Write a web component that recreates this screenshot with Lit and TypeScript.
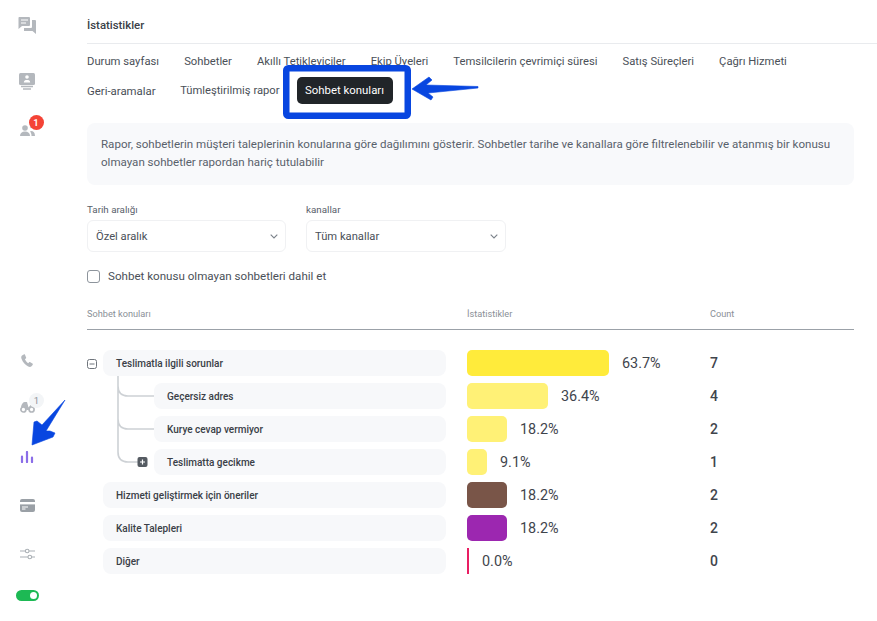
import { LitElement, html, css, svg } from "lit";
import { customElement } from "lit/decorators.js";

interface Row { name: string; level: number; pct: string; width: number; color: string; count: number; }

const ROWS: Row[] = [
  { name: "Teslimatla ilgili sorunlar", level: 0, pct: "63.7%", width: 142, color: "#ffeb3b", count: 7 },
  { name: "Geçersiz adres", level: 1, pct: "36.4%", width: 81, color: "#fff176", count: 4 },
  { name: "Kurye cevap vermiyor", level: 1, pct: "18.2%", width: 40, color: "#fff176", count: 2 },
  { name: "Teslimatta gecikme", level: 1, pct: "9.1%", width: 20, color: "#fff176", count: 1 },
  { name: "Hizmeti geliştirmek için öneriler", level: 0, pct: "18.2%", width: 40, color: "#795548", count: 2 },
  { name: "Kalite Talepleri", level: 0, pct: "18.2%", width: 40, color: "#9c27b0", count: 2 },
  { name: "Diğer", level: 0, pct: "0.0%", width: 2, color: "#e91e63", count: 0 },
];

const chevron = html`<svg class="chev" width="8" height="5" viewBox="0 0 8 5"><path d="M.7.7 4 4 7.300.7" fill="none" stroke="#7b828a" stroke-width="1.100"/></svg>`;

@customElement("app-root")
export class AppRoot extends LitElement {
  static styles = css`
    :host { display: block; position: relative; width: 877px; height: 621px; overflow: hidden; background: #fff;
      font-family: Roboto, "Noto Sans", sans-serif; color: #3f454c; }
    .page { display: flex; height: 621px; }
    .rail { width: 54px; flex: none; display: flex; flex-direction: column; justify-content: space-between; padding-bottom: 14px; box-sizing: border-box; }
    .rail-top { display: grid; grid-template-rows: 50px 64px 32px; justify-items: center; align-items: center; }
    .rail-bot { display: grid; grid-template-rows: 50px 44px 56px 40px 58px 24px; justify-items: center; align-items: center; }
    .ic { position: relative; display: flex; }
    .badge { position: absolute; width: 15px; height: 15px; border-radius: 50%; font-size: 9.5px; line-height: 15px; text-align: center; }
    .badge.red { background: #f44336; color: #fff; font-weight: 600; left: 9px; top: -9.5px; }
    .badge.grey { background: #f3f5f7; color: #8b9299; left: 9.5px; top: -8px; }
    .toggle { width: 23px; height: 11px; border-radius: 6px; background: #1db954; position: relative; }
    .toggle::after { content: ""; position: absolute; right: 2px; top: 2px; width: 7px; height: 7px; border-radius: 50%; background: #fff; }

    .main { flex: 1; padding-left: 33px; min-width: 0; }
    .title { height: 44px; box-sizing: border-box; padding-top: 17px; font-size: 11.4px; line-height: 16px; font-weight: 500; color: #3a4047; border-bottom: 1px solid #e9ebee; }
    .tabs { width: 767px; padding-top: 9px; font-size: 11.25px; color: #4a5058; }
    .tabrow { display: flex; align-items: center; gap: 25px; height: 18px; line-height: 18px; }
    .tabrow.second { margin-top: 6px; height: 27px; gap: 17px; font-size: 11.4px; }
    .tabrow.second .t2 { margin-left: 7.5px; font-size: 11.2px; }
    .active { background: #212529; color: #fff; border-radius: 5px; height: 27px; line-height: 27px; padding: 0 8.5px; }
    .note { width: 767px; box-sizing: border-box; margin-top: 19px; height: 62px; padding: 13px 14px; background: #f8f9fb; border-radius: 8px; font-size: 11.55px; line-height: 17.5px; color: #59616b; white-space: nowrap; }
    .filters { display: flex; gap: 20px; margin-top: 18px; }
    .field { width: 199px; }
    .field.b { width: 200px; }
    .lab { font-size: 9.8px; line-height: 14px; color: #59616b; margin-bottom: 3px; }
    .sel { height: 32px; box-sizing: border-box; border: 1px solid #f0f1f3; border-radius: 6px; display: flex; align-items: center; justify-content: space-between; padding: 0 7px 0 8px; font-size: 11.2px; color: #4a5058; }
    .chk { display: flex; align-items: center; gap: 8px; margin-top: 17px; height: 14px; font-size: 11.6px; color: #4a5058; }
    .box { width: 11px; height: 11px; border: 1px solid #8d949c; border-radius: 3px; }
    .thead { width: 767px; display: grid; grid-template-columns: 380px 243px 1fr; margin-top: 24px; height: 23px; box-sizing: border-box; border-bottom: 1px solid #9ba1a8; font-size: 9.2px; line-height: 14px; color: #8a9097; }
    .tree { position: relative; width: 767px; margin-top: 20px; display: flex; flex-direction: column; gap: 7px; }
    .row { display: grid; grid-template-columns: 380px 243px 1fr; height: 26px; align-items: center; }
    .name { margin-left: 16px; height: 26px; box-sizing: border-box; background: #f7f8fa; border-radius: 8px; width: 343px; padding-left: 13px; line-height: 28px; font-size: 10px; font-weight: 500; color: #3a4047; }
    .row.child .name { margin-left: 67px; width: 292px; }
    .stat { display: flex; align-items: center; gap: 13px; font-size: 14.4px; color: #3f454c; }
    .bar { height: 26px; border-radius: 5px; flex: none; }
    .bar.thin { border-radius: 0; }
    .count { font-size: 14px; font-weight: 500; color: #3f454c; }
    .lines { position: absolute; left: 0; top: 0; pointer-events: none; }
    .annot { position: absolute; left: 0; top: 0; pointer-events: none; }
  `;

  private rail() {
    const g = "#b4b8bd";
    return html`<div class="rail">
      <div class="rail-top">
        <div class="ic"><svg width="18" height="17" viewBox="0 0 18 17"><path d="M1 0h10a1 1 0 0 1 1 1v7a1 1 0 0 1-1 1H4l-3.500 3V1A1 1 0 0 1 1 0z" fill="${g}"/><path d="M3 3h7M3 6h5" stroke="#fff" stroke-width="1"/><path d="M14 3h3a1 1 0 0 1 1 1v13l-3.500-3H6v-3h7a1 1 0 0 0 1-1z" fill="${g}"/></svg></div>
        <div class="ic"><svg width="16" height="18" viewBox="0 0 16 18"><rect width="16" height="12" rx="1.500" fill="${g}"/><circle cx="8" cy="4" r="1.800" fill="#fff"/><path d="M4.800 9.500c0-2 1.500-2.500 3.200-2.500s3.200.500 3.200 2.500z" fill="#fff"/><path d="M2 13.500h12M4 16h8" stroke="${g}" stroke-width="1.600"/></svg></div>
        <div class="ic"><svg width="15" height="11" viewBox="0 0 15 11"><circle cx="5" cy="3" r="2.800" fill="${g}"/><path d="M0 11c0-3 2-4.500 5-4.500S10 8 10 11z" fill="${g}"/><circle cx="11" cy="2" r="1.200" fill="${g}" opacity=".7"/><path d="M11 6c2.500 0 4 1.700 4 5h-3.500c0-2-.5-3.500-1.500-4.500z" fill="${g}"/></svg><span class="badge red">1</span></div>
      </div>
      <div class="rail-bot">
        <div class="ic"><svg width="12" height="13" viewBox="0 0 12 13"><path d="M2.800.4 1 1.500C.2 2.200 0 3.300.5 4.800c1.300 3.600 3.500 6 6.700 7.700 1.300.600 2.500.500 3.300-.3l1.100-1.300c.4-.5.300-1-.2-1.400L9.300 8.200c-.5-.3-1-.2-1.400.2l-.7.800C6 8.600 4.500 6.700 3.900 5.300l.9-.8c.4-.4.500-.9.200-1.300L3.900.6C3.600.2 3.200.1 2.800.4z" fill="${g}"/></svg></div>
        <div class="ic"><svg width="15" height="12" viewBox="0 0 15 12"><circle cx="3.400" cy="8.500" r="2.500" fill="none" stroke="${g}" stroke-width="1.700"/><circle cx="11.600" cy="8.500" r="2.500" fill="none" stroke="${g}" stroke-width="1.700"/><path d="M1 6c.5-3 2-5 4-5h2l1.500 5.500 2-2.500 1 1-2.500 4H6.500C6 7 4 5.500 1 6z" fill="${g}"/></svg><span class="badge grey">1</span></div>
        <div class="ic"><svg width="14" height="12" viewBox="0 0 14 12"><path d="M2 5.500V11M7 1v10M12 6.500V11" stroke="#8b6ee8" stroke-width="2.200" stroke-linecap="round"/></svg></div>
        <div class="ic"><svg width="15" height="13" viewBox="0 0 15 13"><rect width="15" height="13" rx="2" fill="#9aa0a6"/><rect y="3" width="15" height="2.400" fill="#fff"/><path d="M2 8h6M2 10h3.500" stroke="#fff" stroke-width="1"/></svg></div>
        <div class="ic"><svg width="15" height="12" viewBox="0 0 15 12"><path d="M0 3h5.500M9 3h6M0 9h8M11.500 9H15" stroke="#aab0b5" stroke-width="1.100"/><circle cx="7.200" cy="3" r="1.800" fill="none" stroke="#aab0b5" stroke-width="1.100"/><circle cx="9.800" cy="9" r="1.800" fill="none" stroke="#aab0b5" stroke-width="1.100"/></svg></div>
        <div class="toggle"></div>
      </div>
    </div>`;
  }

  private treeLines() {
    return svg`<svg class="lines" width="160" height="130" viewBox="0 0 160 130" fill="none">
      <path d="M31 26V36q0 10 10 10h26M31 36V69q0 10 10 10h26M31 69V102q0 10 10 10h10" stroke="#cdd1d5" stroke-width="1.600"/>
      <rect x="0.500" y="9.500" width="9" height="9" rx="2" fill="#fff" stroke="#6f757c"/>
      <path d="M2.500 14h5" stroke="#6f757c"/>
      <rect x="50.500" y="107" width="10" height="10" rx="2" fill="#555b62"/>
      <path d="M53 112h5M55.500 109.500v5" stroke="#fff" stroke-width="1.200"/>
    </svg>`;
  }

  render() {
    return html`
      <div class="page">
        ${this.rail()}
        <div class="main">
          <div class="title">İstatistikler</div>
          <div class="tabs">
            <div class="tabrow"><span>Durum sayfası</span><span>Sohbetler</span><span>Akıllı Tetikleyiciler</span><span>Ekip Üyeleri</span><span>Temsilcilerin çevrimiçi süresi</span><span>Satış Süreçleri</span><span>Çağrı Hizmeti</span></div>
            <div class="tabrow second"><span>Geri-aramalar</span><span class="t2">Tümleştirilmiş rapor</span><span class="active">Sohbet konuları</span></div>
          </div>
          <div class="note">Rapor, sohbetlerin müşteri taleplerinin konularına göre dağılımını gösterir. Sohbetler tarihe ve kanallara göre filtrelenebilir ve atanmış bir konusu<br>olmayan sohbetler rapordan hariç tutulabilir</div>
          <div class="filters">
            <div class="field"><div class="lab">Tarih aralığı</div><div class="sel"><span>Özel aralık</span>${chevron}</div></div>
            <div class="field b"><div class="lab">kanallar</div><div class="sel"><span>Tüm kanallar</span>${chevron}</div></div>
          </div>
          <div class="chk"><span class="box"></span><span>Sohbet konusu olmayan sohbetleri dahil et</span></div>
          <div class="thead"><span>Sohbet konuları</span><span>İstatistikler</span><span>Count</span></div>
          <div class="tree">
            ${ROWS.map(r => html`<div class="row ${r.level ? "child" : ""}">
              <div class="name">${r.name}</div>
              <div class="stat"><div class="bar ${r.width < 5 ? "thin" : ""}" style="width:${r.width}px;background:${r.color}"></div><span>${r.pct}</span></div>
              <div class="count">${r.count}</div>
            </div>`)}
            ${this.treeLines()}
          </div>
        </div>
      </div>
      <svg class="annot" width="877" height="621" viewBox="0 0 877 621">
        <rect x="286.250" y="68.250" width="121.500" height="47.500" rx="2" fill="none" stroke="#0846e0" stroke-width="6.500"/>
        <path d="M412 89 429 77 432 80 426 85 478 86.500V88L428 93 433 97 431 100z" fill="#0846e0" stroke="#0846e0" stroke-width=".6" stroke-linejoin="round"/>
        <path d="M65 400 42 425 37 421 34 422 32 445 53 437 55 433 50 431 46 431z" fill="#0846e0" stroke="#0846e0" stroke-width=".6" stroke-linejoin="round"/>
      </svg>
    `;
  }
}
